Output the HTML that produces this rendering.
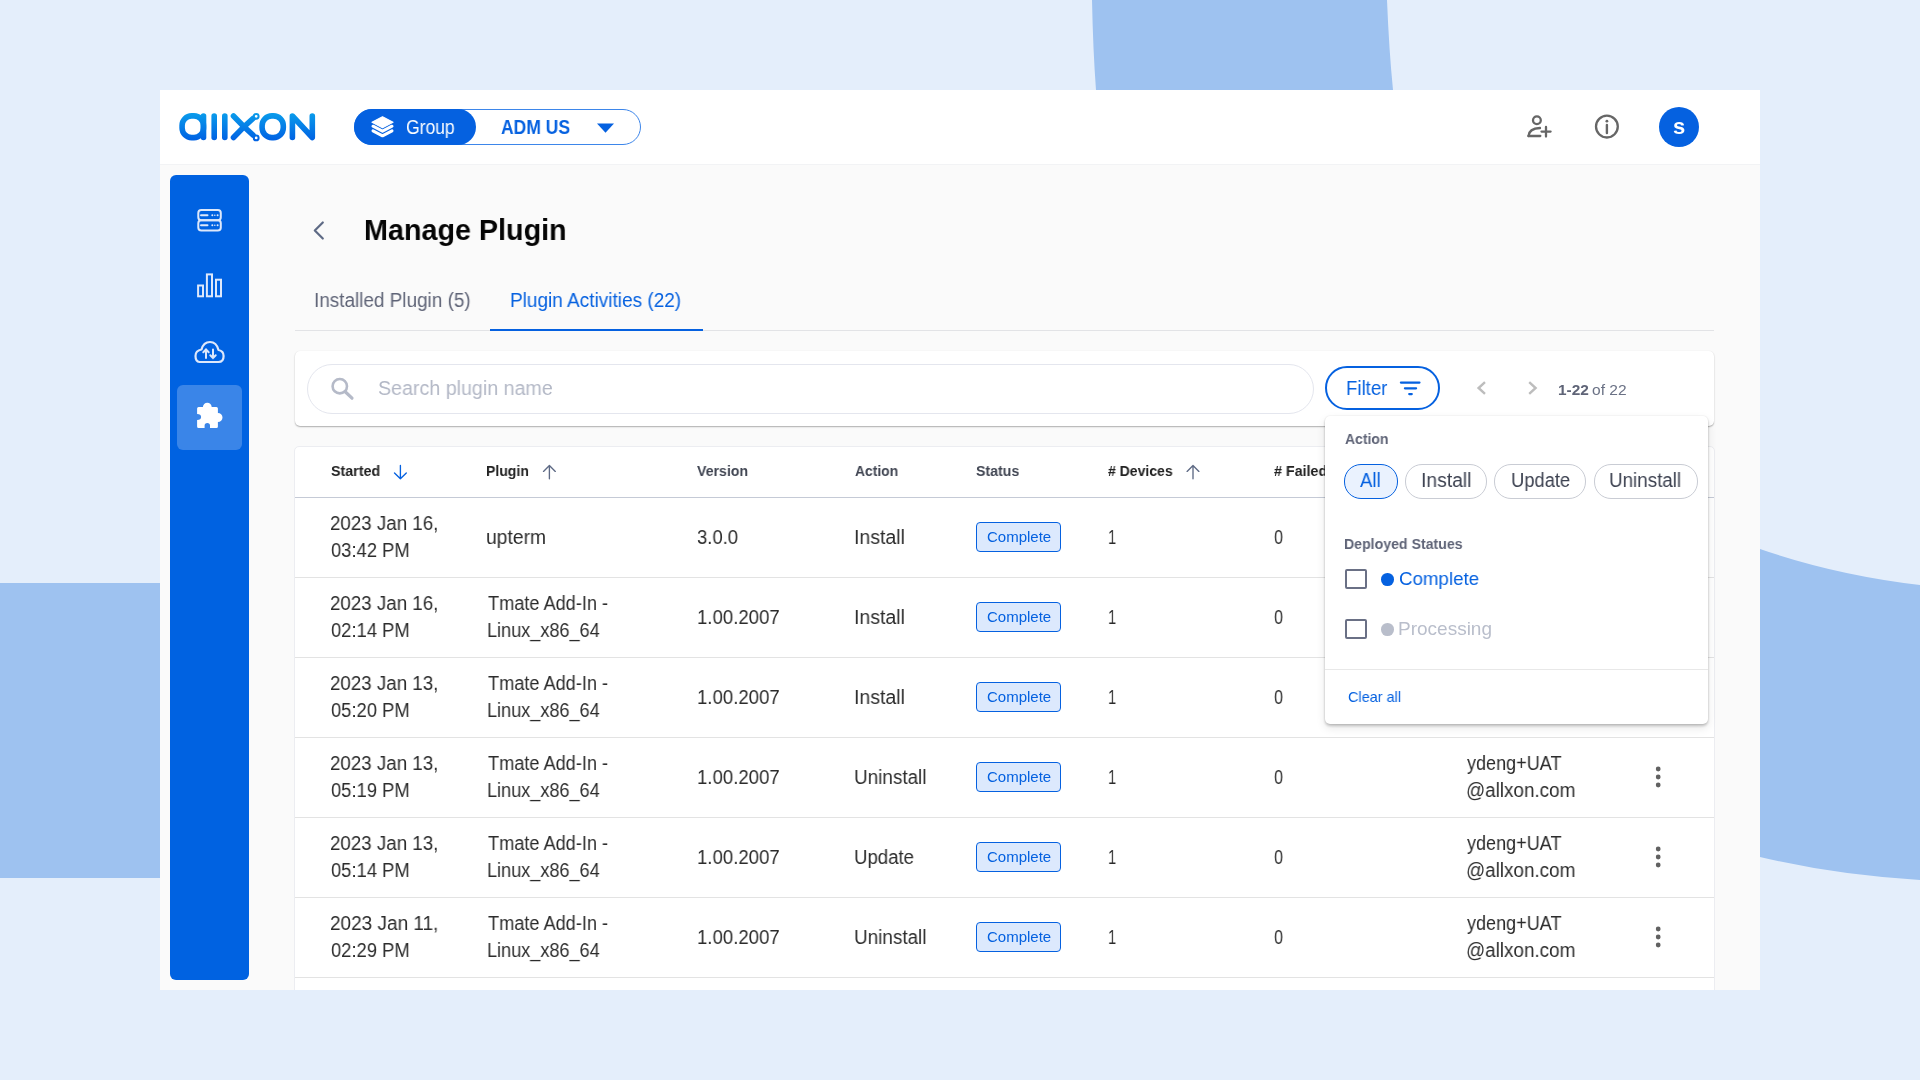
<!DOCTYPE html>
<html><head><meta charset="utf-8">
<style>
*{box-sizing:border-box;margin:0;padding:0}
html,body{width:1920px;height:1080px;overflow:hidden;background:#E4EEFB;font-family:"Liberation Sans",sans-serif}
.abs{position:absolute}
.t{position:absolute;white-space:pre;transform-origin:0 0;will-change:transform;font-family:"Liberation Sans",sans-serif}
#clip{position:absolute;left:160px;top:90px;width:1600px;height:900px;overflow:hidden;background:#FAFAFA}
#world{position:absolute;left:-160px;top:-90px;width:1920px;height:1080px}
</style></head>
<body>
<svg class="abs" style="left:0;top:0" width="1920" height="1080" viewBox="0 0 1920 1080">
  <rect x="0" y="0" width="1920" height="1080" fill="#E4EEFB"/>
  <path d="M1092 0 Q1093 50 1096 90 L1393 90 Q1389 50 1387 0 Z" fill="#9EC2F0"/>
  <rect x="0" y="583" width="160" height="295" fill="#9EC2F0"/>
  <path d="M1760 549 Q1835 575 1920 585 L1920 880 Q1835 875 1760 857 Z" fill="#9EC2F0"/>
</svg>
<div id="clip"><div id="world">
  <!-- header -->
  <div class="abs" style="left:160px;top:90px;width:1600px;height:75px;background:#fff;border-bottom:1px solid #F2F3F5"></div>
  <!-- logo -->
  <svg class="abs" style="left:170px;top:100px" width="160" height="56" viewBox="170 100 160 56">
    <defs><linearGradient id="lg" gradientUnits="userSpaceOnUse" x1="0" y1="113" x2="0" y2="140"><stop offset="0" stop-color="#0A9CEB"/><stop offset="1" stop-color="#0062E3"/></linearGradient></defs>
    <g fill="none" stroke="url(#lg)" stroke-width="5.6" stroke-linecap="round" stroke-linejoin="round">
      <rect x="182.1" y="115.9" width="21.4" height="21.7" rx="9.5" ry="9.5"/>
      <line x1="203.5" y1="116" x2="203.5" y2="137.5"/>
      <line x1="214.2" y1="116" x2="214.2" y2="137.5"/>
      <line x1="224.8" y1="116" x2="224.8" y2="137.5"/>
      <path d="M233.5 116 L244 126.7 L233.5 137.5 M244 126.7 L253 118.5 M244 126.7 L253 135"/>
      <rect x="262.1" y="115.9" width="21.2" height="21.7" rx="9.8" ry="9.8"/>
      <path d="M292.4 137.5 L292.4 116 L312.3 137.5 L312.3 116"/>
    </g>
    <circle cx="256.2" cy="116.3" r="2.4" fill="#fff" stroke="url(#lg)" stroke-width="2"/>
    <circle cx="256.2" cy="137.9" r="2.4" fill="#fff" stroke="url(#lg)" stroke-width="2"/>
  </svg>
  <!-- group toggle -->
  <div class="abs" style="left:354px;top:109px;width:287px;height:36px;border:1px solid #3D86EA;border-radius:18px"></div>
  <div class="abs" style="left:354px;top:109px;width:122px;height:36px;background:#0561E0;border-radius:18px"></div>
  <svg class="abs" style="left:370px;top:114px" width="26" height="26" viewBox="0 0 26 26">
    <path d="M12.5 2.8 L23 8.3 L12.5 13.8 L2 8.3 Z" fill="#fff" stroke="#fff" stroke-width="1.2" stroke-linejoin="round"/>
    <path d="M3 12.2 L12.5 17.2 L22 12.2" fill="none" stroke="#fff" stroke-width="3" stroke-linejoin="round" stroke-linecap="round"/>
    <path d="M3 16.8 L12.5 21.8 L22 16.8" fill="none" stroke="#fff" stroke-width="3" stroke-linejoin="round" stroke-linecap="round"/>
  </svg>
  <svg class="abs" style="left:596px;top:122px" width="20" height="12" viewBox="0 0 20 12">
    <path d="M1 1.4 L18 1.4 L9.5 10.8 Z" fill="#0561E0"/>
  </svg>
  <!-- header icons -->
  <svg class="abs" style="left:1520px;top:108px" width="40" height="36" viewBox="1520 108 40 36">
    <g fill="none" stroke="#666666" stroke-width="2.3" stroke-linecap="round">
      <circle cx="1536.9" cy="120.3" r="3.9"/>
      <path d="M1528.5 136 Q1529 128.5 1540 128"/>
      <path d="M1528.5 136 L1540.3 136"/>
      <path d="M1541.5 131.6 L1550.6 131.6 M1546 127 L1546 136.5"/>
    </g>
  </svg>
  <svg class="abs" style="left:1590px;top:110px" width="34" height="34" viewBox="1590 110 34 34">
    <circle cx="1606.9" cy="126.6" r="10.9" fill="none" stroke="#666666" stroke-width="2.3"/>
    <circle cx="1606.9" cy="121.2" r="1.4" fill="#666666"/>
    <path d="M1606.9 125 L1606.9 133" stroke="#666666" stroke-width="2.4" stroke-linecap="round"/>
  </svg>
  <div class="abs" style="left:1659.3px;top:106.9px;width:40px;height:40px;border-radius:50%;background:#0561E0"></div>
  <div class="t" style="left:1672.5px;top:107px;font-size:22px;line-height:40px;font-weight:700;color:#fff">s</div>

  <!-- sidebar -->
  <div class="abs" style="left:169.7px;top:175px;width:79.8px;height:805px;background:#0062E1;border-radius:6px"></div>
  <div class="abs" style="left:177px;top:385px;width:65px;height:65px;background:#3A85E8;border-radius:6px"></div>
  <svg class="abs" style="left:169px;top:175px" width="81" height="300" viewBox="169 175 81 300">
    <g fill="none" stroke="#DDE8FB" stroke-width="2" stroke-linecap="round">
      <rect x="198.3" y="210.1" width="22.5" height="10.2" rx="3"/>
      <rect x="198.3" y="220.3" width="22.5" height="10.3" rx="3"/>
      <path d="M201 215.2 L207.5 215.2 M201 225.3 L207.5 225.3"/>
      <rect x="198.1" y="285.5" width="4.9" height="10.8"/>
      <rect x="206.9" y="274.4" width="5.1" height="21.9"/>
      <rect x="216" y="279.7" width="5" height="16.6"/>
      <path d="M199.5 362 Q195.5 361.5 195.5 356 Q195.5 350.5 201.5 349.5 Q203.5 342 210 342 Q216.5 342 218.5 350 Q223.6 351 223.6 356 Q223.6 362 218.5 362 Z" stroke-width="2.2" stroke-linejoin="round"/>
      <path d="M206 358 L206 350 M203.3 352.2 L206 349.5 L208.7 352.2 M213 349.5 L213 358 M210.3 355.3 L213 358 L215.7 355.3" stroke-width="2"/>
    </g>
    <g fill="#DDE8FB">
      <circle cx="212.3" cy="215.2" r="1"/><circle cx="214.8" cy="215.2" r="0.8"/><circle cx="217.6" cy="215.2" r="1"/>
      <circle cx="212.3" cy="225.3" r="1"/><circle cx="214.8" cy="225.3" r="0.8"/><circle cx="217.6" cy="225.3" r="1"/>
    </g>
    <path fill="#fff" d="M197.1 408.6 Q197.1 407.1 198.6 407.1 L202.9 407.1 A4.4 4.4 0 0 1 211.7 407.1 L216.4 407.1 Q217.9 407.1 217.9 408.6 L217.9 412.9 A4.6 4.6 0 0 1 217.9 422.1 L217.9 426.4 Q217.9 427.9 216.4 427.9 L210 427.9 L210 425.6 A2.7 2.7 0 0 0 204.6 425.6 L204.6 427.9 L198.6 427.9 Q197.1 427.9 197.1 426.4 L197.1 420.1 A4 3 0 0 0 197.1 414.1 Z"/>
  </svg>

  <!-- title chevron -->
  <svg class="abs" style="left:305px;top:215px" width="30" height="30" viewBox="305 215 30 30">
    <path d="M322.8 222.5 L314.8 230.5 L322.8 238.5" fill="none" stroke="#5E6A85" stroke-width="2.2" stroke-linecap="round" stroke-linejoin="round"/>
  </svg>
  <!-- tabs line -->
  <div class="abs" style="left:295px;top:330px;width:1419px;height:1px;background:#E2E3E6"></div>
  <div class="abs" style="left:490px;top:328.5px;width:213px;height:2.2px;background:#0561E0"></div>

  <!-- toolbar card -->
  <div class="abs" style="left:294.5px;top:351px;width:1419.5px;height:75px;background:#fff;border-radius:5px;box-shadow:0 1px 1.5px rgba(0,0,0,0.3),0 0 1px rgba(0,0,0,0.07)"></div>
  <div class="abs" style="left:307px;top:364px;width:1007px;height:49.5px;border:1px solid #E4E6EE;border-radius:25px;background:#fff"></div>
  <svg class="abs" style="left:325px;top:370px" width="36" height="36" viewBox="325 370 36 36">
    <circle cx="339.8" cy="386.2" r="7.2" fill="none" stroke="#B5BAC8" stroke-width="2.6"/>
    <path d="M345.5 392 L352 398.2" stroke="#B5BAC8" stroke-width="3.2" stroke-linecap="round"/>
  </svg>
  <div class="abs" style="left:1324.5px;top:366.2px;width:115px;height:44.2px;border:2px solid #0561E0;border-radius:22px"></div>
  <svg class="abs" style="left:1395px;top:375px" width="30" height="25" viewBox="1395 375 30 25">
    <path d="M1400.9 382.6 L1419.5 382.6 M1404.9 388.3 L1416.1 388.3 M1409.2 394.1 L1411.8 394.1" stroke="#0561E0" stroke-width="2.2" stroke-linecap="round"/>
  </svg>
  <svg class="abs" style="left:1470px;top:375px" width="75" height="25" viewBox="1470 375 75 25">
    <path d="M1485 382.2 L1478.6 388 L1485 393.8 M1529.2 382.2 L1535.6 388 L1529.2 393.8" fill="none" stroke="#BDBDBD" stroke-width="2.4" stroke-linecap="butt" stroke-linejoin="miter"/>
  </svg>

  <!-- table card -->
  <div class="abs" style="left:294px;top:446px;width:1421px;height:700px;background:#fff;border:1px solid #ECEDF1;border-radius:5px"></div>
  <div class="abs" style="left:295px;top:496.5px;width:1419px;height:1.3px;background:#C5CAD6"></div>
  <div class="abs" style="left:295px;top:577px;width:1419px;height:1px;background:#E3E3E3"></div>
  <div class="abs" style="left:295px;top:657px;width:1419px;height:1px;background:#E3E3E3"></div>
  <div class="abs" style="left:295px;top:737px;width:1419px;height:1px;background:#E3E3E3"></div>
  <div class="abs" style="left:295px;top:817px;width:1419px;height:1px;background:#E3E3E3"></div>
  <div class="abs" style="left:295px;top:897px;width:1419px;height:1px;background:#E3E3E3"></div>
  <div class="abs" style="left:295px;top:977px;width:1419px;height:1px;background:#E3E3E3"></div>
  <svg class="abs" style="left:380px;top:455px" width="900" height="35" viewBox="380 455 900 35">
    <g fill="none" stroke-width="1.35" stroke-linecap="round" stroke-linejoin="round">
      <path d="M400.4 465.5 L400.4 478.8 M394.5 473 L400.4 478.8 L406.3 473" stroke="#0561E0"/>
      <path d="M549.4 465.5 L549.4 478.8 M543.5 471.4 L549.4 465.5 L555.3 471.4" stroke="#5E6A85"/>
      <path d="M1193 465.5 L1193 478.8 M1187.1 471.4 L1193 465.5 L1198.9 471.4" stroke="#5E6A85"/>
    </g>
  </svg>
  <!-- badges -->
  <div class="abs" style="left:976px;top:522px;width:85px;height:30px;background:#DCE9FD;border:1px solid #0561E0;border-radius:4px"></div>
  <div class="abs" style="left:976px;top:602px;width:85px;height:30px;background:#DCE9FD;border:1px solid #0561E0;border-radius:4px"></div>
  <div class="abs" style="left:976px;top:682px;width:85px;height:30px;background:#DCE9FD;border:1px solid #0561E0;border-radius:4px"></div>
  <div class="abs" style="left:976px;top:762px;width:85px;height:30px;background:#DCE9FD;border:1px solid #0561E0;border-radius:4px"></div>
  <div class="abs" style="left:976px;top:842px;width:85px;height:30px;background:#DCE9FD;border:1px solid #0561E0;border-radius:4px"></div>
  <div class="abs" style="left:976px;top:922px;width:85px;height:30px;background:#DCE9FD;border:1px solid #0561E0;border-radius:4px"></div>
  <!-- kebabs -->
  <svg class="abs" style="left:1648px;top:500px" width="20" height="480" viewBox="1648 500 20 480">
    <g fill="#616161">
      <circle cx="1658.2" cy="529" r="2.4"/><circle cx="1658.2" cy="537" r="2.4"/><circle cx="1658.2" cy="545" r="2.4"/>
      <circle cx="1658.2" cy="609" r="2.4"/><circle cx="1658.2" cy="617" r="2.4"/><circle cx="1658.2" cy="625" r="2.4"/>
      <circle cx="1658.2" cy="689" r="2.4"/><circle cx="1658.2" cy="697" r="2.4"/><circle cx="1658.2" cy="705" r="2.4"/>
      <circle cx="1658.2" cy="769" r="2.4"/><circle cx="1658.2" cy="777" r="2.4"/><circle cx="1658.2" cy="785" r="2.4"/>
      <circle cx="1658.2" cy="849" r="2.4"/><circle cx="1658.2" cy="857" r="2.4"/><circle cx="1658.2" cy="865" r="2.4"/>
      <circle cx="1658.2" cy="929" r="2.4"/><circle cx="1658.2" cy="937" r="2.4"/><circle cx="1658.2" cy="945" r="2.4"/>
    </g>
  </svg>
<div class="t" style="left:406.30px;top:117.90px;font-size:19.5px;line-height:19.5px;font-weight:400;color:#FFFFFF;transform:scaleX(0.8979);">Group</div>
<div class="t" style="left:501.00px;top:117.75px;font-size:19.5px;line-height:19.5px;font-weight:700;color:#0561E0;transform:scaleX(0.8972);">ADM US</div>
<div class="t" style="left:363.89px;top:215.20px;font-size:30px;line-height:30px;font-weight:700;color:#050505;transform:scaleX(0.9575);">Manage Plugin</div>
<div class="t" style="left:313.73px;top:290.90px;font-size:19.5px;line-height:19.5px;font-weight:400;color:#5F6477;transform:scaleX(0.9699);">Installed Plugin (5)</div>
<div class="t" style="left:510.13px;top:290.90px;font-size:19.5px;line-height:19.5px;font-weight:400;color:#0561E0;transform:scaleX(0.9745);">Plugin Activities (22)</div>
<div class="t" style="left:378.30px;top:377.80px;font-size:20px;line-height:20px;font-weight:400;color:#B3B8C6;transform:scaleX(0.9827);">Search plugin name</div>
<div class="t" style="left:1346.17px;top:377.90px;font-size:20px;line-height:20px;font-weight:400;color:#0561E0;transform:scaleX(0.9319);">Filter</div>
<div class="t" style="left:1557.60px;top:382.00px;font-size:15px;line-height:15px;font-weight:700;color:#5F6477;transform:scaleX(1.0276);">1-22</div>
<div class="t" style="left:1591.50px;top:382.00px;font-size:15px;line-height:15px;font-weight:400;color:#6A7185;transform:scaleX(1.0358);">of 22</div>
<div class="t" style="left:330.50px;top:463.25px;font-size:15px;line-height:15px;font-weight:700;color:#222222;transform:scaleX(0.9511);">Started</div>
<div class="t" style="left:486.07px;top:463.25px;font-size:15px;line-height:15px;font-weight:700;color:#222222;transform:scaleX(0.9347);">Plugin</div>
<div class="t" style="left:697.00px;top:463.25px;font-size:15px;line-height:15px;font-weight:700;color:#404552;transform:scaleX(0.9439);">Version</div>
<div class="t" style="left:854.70px;top:463.25px;font-size:15px;line-height:15px;font-weight:700;color:#404552;transform:scaleX(0.9247);">Action</div>
<div class="t" style="left:975.80px;top:463.25px;font-size:15px;line-height:15px;font-weight:700;color:#404552;transform:scaleX(0.9451);">Status</div>
<div class="t" style="left:1108.10px;top:463.25px;font-size:15px;line-height:15px;font-weight:700;color:#222222;transform:scaleX(0.9335);"># Devices</div>
<div class="t" style="left:1274.00px;top:463.25px;font-size:15px;line-height:15px;font-weight:700;color:#222222;transform:scaleX(0.9517);"># Failed</div>
<div class="t" style="left:1467.00px;top:463.25px;font-size:15px;line-height:15px;font-weight:700;color:#404552;transform:scaleX(0.9762);">Operator</div>
<div class="t" style="left:329.96px;top:512.70px;font-size:20px;line-height:20px;font-weight:400;color:#2C2C2C;transform:scaleX(0.9372);">2023 Jan 16,</div>
<div class="t" style="left:330.90px;top:539.90px;font-size:20px;line-height:20px;font-weight:400;color:#2C2C2C;transform:scaleX(0.9194);">03:42 PM</div>
<div class="t" style="left:486.03px;top:527.25px;font-size:20px;line-height:20px;font-weight:400;color:#2C2C2C;transform:scaleX(0.9656);">upterm</div>
<div class="t" style="left:697.00px;top:527.25px;font-size:20px;line-height:20px;font-weight:400;color:#2C2C2C;transform:scaleX(0.9243);">3.0.0</div>
<div class="t" style="left:853.83px;top:527.25px;font-size:20px;line-height:20px;font-weight:400;color:#2C2C2C;transform:scaleX(0.9744);">Install</div>
<div class="t" style="left:986.70px;top:529.10px;font-size:15px;line-height:15px;font-weight:400;color:#0561E0;transform:scaleX(0.9944);">Complete</div>
<div class="t" style="left:1107.66px;top:527.25px;font-size:20px;line-height:20px;font-weight:400;color:#2C2C2C;transform:scaleX(0.7400);">1</div>
<div class="t" style="left:1274.00px;top:527.25px;font-size:20px;line-height:20px;font-weight:400;color:#2C2C2C;transform:scaleX(0.8182);">0</div>
<div class="t" style="left:1466.70px;top:512.70px;font-size:20px;line-height:20px;font-weight:400;color:#2C2C2C;transform:scaleX(0.9026);">ydeng+UAT</div>
<div class="t" style="left:1465.76px;top:539.90px;font-size:20px;line-height:20px;font-weight:400;color:#2C2C2C;transform:scaleX(0.9436);">@allxon.com</div>
<div class="t" style="left:329.96px;top:592.70px;font-size:20px;line-height:20px;font-weight:400;color:#2C2C2C;transform:scaleX(0.9372);">2023 Jan 16,</div>
<div class="t" style="left:330.90px;top:619.90px;font-size:20px;line-height:20px;font-weight:400;color:#2C2C2C;transform:scaleX(0.9194);">02:14 PM</div>
<div class="t" style="left:487.50px;top:592.70px;font-size:20px;line-height:20px;font-weight:400;color:#2C2C2C;transform:scaleX(0.9079);">Tmate Add-In -</div>
<div class="t" style="left:486.60px;top:619.90px;font-size:20px;line-height:20px;font-weight:400;color:#2C2C2C;transform:scaleX(0.9050);">Linux_x86_64</div>
<div class="t" style="left:697.37px;top:607.25px;font-size:20px;line-height:20px;font-weight:400;color:#2C2C2C;transform:scaleX(0.9300);">1.00.2007</div>
<div class="t" style="left:853.83px;top:607.25px;font-size:20px;line-height:20px;font-weight:400;color:#2C2C2C;transform:scaleX(0.9744);">Install</div>
<div class="t" style="left:986.70px;top:609.10px;font-size:15px;line-height:15px;font-weight:400;color:#0561E0;transform:scaleX(0.9944);">Complete</div>
<div class="t" style="left:1107.66px;top:607.25px;font-size:20px;line-height:20px;font-weight:400;color:#2C2C2C;transform:scaleX(0.7400);">1</div>
<div class="t" style="left:1274.00px;top:607.25px;font-size:20px;line-height:20px;font-weight:400;color:#2C2C2C;transform:scaleX(0.8182);">0</div>
<div class="t" style="left:1466.70px;top:592.70px;font-size:20px;line-height:20px;font-weight:400;color:#2C2C2C;transform:scaleX(0.9026);">ydeng+UAT</div>
<div class="t" style="left:1465.76px;top:619.90px;font-size:20px;line-height:20px;font-weight:400;color:#2C2C2C;transform:scaleX(0.9436);">@allxon.com</div>
<div class="t" style="left:329.96px;top:672.70px;font-size:20px;line-height:20px;font-weight:400;color:#2C2C2C;transform:scaleX(0.9372);">2023 Jan 13,</div>
<div class="t" style="left:330.90px;top:699.90px;font-size:20px;line-height:20px;font-weight:400;color:#2C2C2C;transform:scaleX(0.9194);">05:20 PM</div>
<div class="t" style="left:487.50px;top:672.70px;font-size:20px;line-height:20px;font-weight:400;color:#2C2C2C;transform:scaleX(0.9079);">Tmate Add-In -</div>
<div class="t" style="left:486.60px;top:699.90px;font-size:20px;line-height:20px;font-weight:400;color:#2C2C2C;transform:scaleX(0.9050);">Linux_x86_64</div>
<div class="t" style="left:697.37px;top:687.25px;font-size:20px;line-height:20px;font-weight:400;color:#2C2C2C;transform:scaleX(0.9300);">1.00.2007</div>
<div class="t" style="left:853.83px;top:687.25px;font-size:20px;line-height:20px;font-weight:400;color:#2C2C2C;transform:scaleX(0.9744);">Install</div>
<div class="t" style="left:986.70px;top:689.10px;font-size:15px;line-height:15px;font-weight:400;color:#0561E0;transform:scaleX(0.9944);">Complete</div>
<div class="t" style="left:1107.66px;top:687.25px;font-size:20px;line-height:20px;font-weight:400;color:#2C2C2C;transform:scaleX(0.7400);">1</div>
<div class="t" style="left:1274.00px;top:687.25px;font-size:20px;line-height:20px;font-weight:400;color:#2C2C2C;transform:scaleX(0.8182);">0</div>
<div class="t" style="left:1466.70px;top:672.70px;font-size:20px;line-height:20px;font-weight:400;color:#2C2C2C;transform:scaleX(0.9026);">ydeng+UAT</div>
<div class="t" style="left:1465.76px;top:699.90px;font-size:20px;line-height:20px;font-weight:400;color:#2C2C2C;transform:scaleX(0.9436);">@allxon.com</div>
<div class="t" style="left:329.96px;top:752.70px;font-size:20px;line-height:20px;font-weight:400;color:#2C2C2C;transform:scaleX(0.9372);">2023 Jan 13,</div>
<div class="t" style="left:330.90px;top:779.90px;font-size:20px;line-height:20px;font-weight:400;color:#2C2C2C;transform:scaleX(0.9194);">05:19 PM</div>
<div class="t" style="left:487.50px;top:752.70px;font-size:20px;line-height:20px;font-weight:400;color:#2C2C2C;transform:scaleX(0.9079);">Tmate Add-In -</div>
<div class="t" style="left:486.60px;top:779.90px;font-size:20px;line-height:20px;font-weight:400;color:#2C2C2C;transform:scaleX(0.9050);">Linux_x86_64</div>
<div class="t" style="left:697.37px;top:767.25px;font-size:20px;line-height:20px;font-weight:400;color:#2C2C2C;transform:scaleX(0.9300);">1.00.2007</div>
<div class="t" style="left:853.86px;top:767.25px;font-size:20px;line-height:20px;font-weight:400;color:#2C2C2C;transform:scaleX(0.9448);">Uninstall</div>
<div class="t" style="left:986.70px;top:769.10px;font-size:15px;line-height:15px;font-weight:400;color:#0561E0;transform:scaleX(0.9944);">Complete</div>
<div class="t" style="left:1107.66px;top:767.25px;font-size:20px;line-height:20px;font-weight:400;color:#2C2C2C;transform:scaleX(0.7400);">1</div>
<div class="t" style="left:1274.00px;top:767.25px;font-size:20px;line-height:20px;font-weight:400;color:#2C2C2C;transform:scaleX(0.8182);">0</div>
<div class="t" style="left:1466.70px;top:752.70px;font-size:20px;line-height:20px;font-weight:400;color:#2C2C2C;transform:scaleX(0.9026);">ydeng+UAT</div>
<div class="t" style="left:1465.76px;top:779.90px;font-size:20px;line-height:20px;font-weight:400;color:#2C2C2C;transform:scaleX(0.9436);">@allxon.com</div>
<div class="t" style="left:329.96px;top:832.70px;font-size:20px;line-height:20px;font-weight:400;color:#2C2C2C;transform:scaleX(0.9372);">2023 Jan 13,</div>
<div class="t" style="left:330.90px;top:859.90px;font-size:20px;line-height:20px;font-weight:400;color:#2C2C2C;transform:scaleX(0.9194);">05:14 PM</div>
<div class="t" style="left:487.50px;top:832.70px;font-size:20px;line-height:20px;font-weight:400;color:#2C2C2C;transform:scaleX(0.9079);">Tmate Add-In -</div>
<div class="t" style="left:486.60px;top:859.90px;font-size:20px;line-height:20px;font-weight:400;color:#2C2C2C;transform:scaleX(0.9050);">Linux_x86_64</div>
<div class="t" style="left:697.37px;top:847.25px;font-size:20px;line-height:20px;font-weight:400;color:#2C2C2C;transform:scaleX(0.9300);">1.00.2007</div>
<div class="t" style="left:853.87px;top:847.25px;font-size:20px;line-height:20px;font-weight:400;color:#2C2C2C;transform:scaleX(0.9311);">Update</div>
<div class="t" style="left:986.70px;top:849.10px;font-size:15px;line-height:15px;font-weight:400;color:#0561E0;transform:scaleX(0.9944);">Complete</div>
<div class="t" style="left:1107.66px;top:847.25px;font-size:20px;line-height:20px;font-weight:400;color:#2C2C2C;transform:scaleX(0.7400);">1</div>
<div class="t" style="left:1274.00px;top:847.25px;font-size:20px;line-height:20px;font-weight:400;color:#2C2C2C;transform:scaleX(0.8182);">0</div>
<div class="t" style="left:1466.70px;top:832.70px;font-size:20px;line-height:20px;font-weight:400;color:#2C2C2C;transform:scaleX(0.9026);">ydeng+UAT</div>
<div class="t" style="left:1465.76px;top:859.90px;font-size:20px;line-height:20px;font-weight:400;color:#2C2C2C;transform:scaleX(0.9436);">@allxon.com</div>
<div class="t" style="left:329.95px;top:912.70px;font-size:20px;line-height:20px;font-weight:400;color:#2C2C2C;transform:scaleX(0.9497);">2023 Jan 11,</div>
<div class="t" style="left:330.90px;top:939.90px;font-size:20px;line-height:20px;font-weight:400;color:#2C2C2C;transform:scaleX(0.9194);">02:29 PM</div>
<div class="t" style="left:487.50px;top:912.70px;font-size:20px;line-height:20px;font-weight:400;color:#2C2C2C;transform:scaleX(0.9079);">Tmate Add-In -</div>
<div class="t" style="left:486.60px;top:939.90px;font-size:20px;line-height:20px;font-weight:400;color:#2C2C2C;transform:scaleX(0.9050);">Linux_x86_64</div>
<div class="t" style="left:697.37px;top:927.25px;font-size:20px;line-height:20px;font-weight:400;color:#2C2C2C;transform:scaleX(0.9300);">1.00.2007</div>
<div class="t" style="left:853.86px;top:927.25px;font-size:20px;line-height:20px;font-weight:400;color:#2C2C2C;transform:scaleX(0.9448);">Uninstall</div>
<div class="t" style="left:986.70px;top:929.10px;font-size:15px;line-height:15px;font-weight:400;color:#0561E0;transform:scaleX(0.9944);">Complete</div>
<div class="t" style="left:1107.66px;top:927.25px;font-size:20px;line-height:20px;font-weight:400;color:#2C2C2C;transform:scaleX(0.7400);">1</div>
<div class="t" style="left:1274.00px;top:927.25px;font-size:20px;line-height:20px;font-weight:400;color:#2C2C2C;transform:scaleX(0.8182);">0</div>
<div class="t" style="left:1466.70px;top:912.70px;font-size:20px;line-height:20px;font-weight:400;color:#2C2C2C;transform:scaleX(0.9026);">ydeng+UAT</div>
<div class="t" style="left:1465.76px;top:939.90px;font-size:20px;line-height:20px;font-weight:400;color:#2C2C2C;transform:scaleX(0.9436);">@allxon.com</div>

  <!-- dropdown -->
  <div class="abs" style="left:1324.5px;top:416px;width:383.5px;height:308px;background:#fff;border-radius:5px;box-shadow:0 2px 3px rgba(0,0,0,0.2),0 4px 10px rgba(0,0,0,0.1),0 0 2px rgba(0,0,0,0.12)"></div>
  <div class="abs" style="left:1344.2px;top:464.2px;width:53.5px;height:35px;background:#EAF2FE;border:1.3px solid #0561E0;border-radius:17px"></div>
  <div class="abs" style="left:1405px;top:464.2px;width:82px;height:35px;border:1px solid #C9CCD4;border-radius:17px"></div>
  <div class="abs" style="left:1494.2px;top:464.2px;width:91.6px;height:35px;border:1px solid #C9CCD4;border-radius:17px"></div>
  <div class="abs" style="left:1594.2px;top:464.2px;width:103.5px;height:35px;border:1px solid #C9CCD4;border-radius:17px"></div>
  <div class="abs" style="left:1345.2px;top:568.8px;width:21.5px;height:20.5px;border:2px solid #6A7085;border-radius:2px"></div>
  <div class="abs" style="left:1345.2px;top:618.8px;width:21.5px;height:20.5px;border:2px solid #6A7085;border-radius:2px"></div>
  <div class="abs" style="left:1381px;top:572.9px;width:12.7px;height:12.7px;border-radius:50%;background:#0561E0"></div>
  <div class="abs" style="left:1381px;top:622.9px;width:12.7px;height:12.7px;border-radius:50%;background:#B9BECB"></div>
  <div class="abs" style="left:1324.5px;top:669px;width:383.5px;height:1px;background:#E8E8E8"></div>
<div class="t" style="left:1344.60px;top:430.75px;font-size:15px;line-height:15px;font-weight:700;color:#5F6477;transform:scaleX(0.9312);">Action</div>
<div class="t" style="left:1360.20px;top:470.00px;font-size:20px;line-height:20px;font-weight:400;color:#0561E0;transform:scaleX(0.9319);">All</div>
<div class="t" style="left:1420.73px;top:470.00px;font-size:20px;line-height:20px;font-weight:400;color:#3C4150;transform:scaleX(0.9665);">Install</div>
<div class="t" style="left:1510.88px;top:470.00px;font-size:20px;line-height:20px;font-weight:400;color:#3C4150;transform:scaleX(0.9184);">Update</div>
<div class="t" style="left:1609.16px;top:470.00px;font-size:20px;line-height:20px;font-weight:400;color:#3C4150;transform:scaleX(0.9395);">Uninstall</div>
<div class="t" style="left:1343.66px;top:535.50px;font-size:15px;line-height:15px;font-weight:700;color:#5F6477;transform:scaleX(0.9420);">Deployed Statues</div>
<div class="t" style="left:1399.00px;top:569.00px;font-size:19px;line-height:19px;font-weight:400;color:#0561E0;transform:scaleX(0.9845);">Complete</div>
<div class="t" style="left:1398.00px;top:619.00px;font-size:19px;line-height:19px;font-weight:400;color:#B9BECB;transform:scaleX(0.9954);">Processing</div>
<div class="t" style="left:1348.10px;top:689.00px;font-size:15px;line-height:15px;font-weight:400;color:#0561E0;transform:scaleX(0.9646);">Clear all</div>
</div></div>
</body></html>
